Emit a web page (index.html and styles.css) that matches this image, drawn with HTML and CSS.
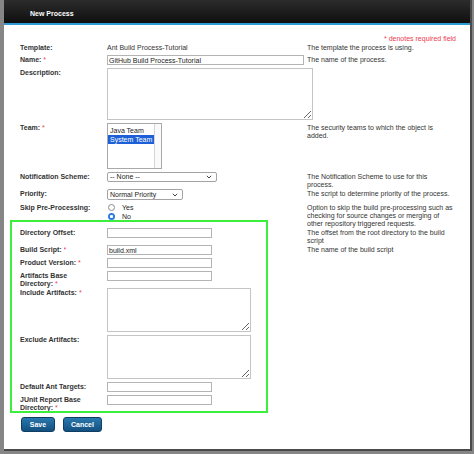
FILE: index.html
```html
<!DOCTYPE html>
<html lang="en">
<head>
  <meta charset="UTF-8">
  <meta name="viewport" content="width=device-width, initial-scale=1.0">
  <title>New Process</title>
  <link rel="stylesheet" href="styles.css">
</head>
<body>

  <div class="dialog">
    <div class="dialog-head">
      <h1>New Process</h1>
    </div>

    <div class="dialog-body">
      <div class="req-note">* denotes required field</div>

      <!-- Process form -->
      <div class="form">
        <div class="lbl">Template:</div>
        <div class="val-text">Ant Build Process-Tutorial</div>
        <div class="help">The template the process is using.</div>

        <div class="lbl">Name: <span class="req">*</span></div>
        <div class="val"><input class="field w-name" type="text" value="GitHub Build Process-Tutorial"></div>
        <div class="help">The name of the process.</div>

        <div class="lbl">Description:</div>
        <div class="val"><textarea class="area w-desc"></textarea></div>
        <div class="help"></div>

        <div class="lbl">Team: <span class="req">*</span></div>
        <div class="val">
          <div class="listbox">
            <div class="options">
              <div class="opt">Java Team</div>
              <div class="opt selected">System Team</div>
            </div>
            <div class="track"></div>
          </div>
        </div>
        <div class="help">The security teams to which the object is added.</div>

        <div class="lbl">Notification Scheme:</div>
        <div class="val">
          <div class="select sel-notif">-- None --
            <svg class="chev" width="6" height="4" viewBox="0 0 6 4"><path d="M0.8 0.8 L3 3 L5.2 0.8" fill="none" stroke="#444" stroke-width="1"/></svg>
          </div>
        </div>
        <div class="help">The Notification Scheme to use for this process.</div>

        <div class="lbl">Priority:</div>
        <div class="val">
          <div class="select sel-pri">Normal Priority
            <svg class="chev" width="6" height="4" viewBox="0 0 6 4"><path d="M0.8 0.8 L3 3 L5.2 0.8" fill="none" stroke="#444" stroke-width="1"/></svg>
          </div>
        </div>
        <div class="help">The script to determine priority of the process.</div>

        <div class="lbl">Skip Pre-Processing:</div>
        <div class="val">
          <div class="radio-line"><span class="radio"></span>Yes</div>
          <div class="radio-line"><span class="radio checked"></span>No</div>
        </div>
        <div class="help">Option to skip the build pre-processing such as checking for source changes or merging of other repository triggered requests.</div>

        <div class="lbl">Directory Offset:</div>
        <div class="val"><input class="field w-short" type="text" value=""></div>
        <div class="help">The offset from the root directory to the build script</div>

        <div class="lbl">Build Script: <span class="req">*</span></div>
        <div class="val"><input class="field w-short" type="text" value="build.xml"></div>
        <div class="help">The name of the build script</div>

        <div class="lbl">Product Version: <span class="req">*</span></div>
        <div class="val"><input class="field w-short" type="text" value=""></div>
        <div class="help"></div>

        <div class="lbl">Artifacts Base<br>Directory: <span class="req">*</span></div>
        <div class="val"><input class="field w-short" type="text" value=""></div>
        <div class="help"></div>

        <div class="lbl">Include Artifacts: <span class="req">*</span></div>
        <div class="val"><textarea class="area w-art"></textarea></div>
        <div class="help"></div>

        <div class="lbl">Exclude Artifacts:</div>
        <div class="val"><textarea class="area w-art"></textarea></div>
        <div class="help"></div>

        <div class="lbl">Default Ant Targets:</div>
        <div class="val"><input class="field w-short" type="text" value=""></div>
        <div class="help"></div>

        <div class="lbl">JUnit Report Base<br>Directory: <span class="req">*</span></div>
        <div class="val"><input class="field w-short" type="text" value=""></div>
        <div class="help"></div>
      </div>

      <div class="actions">
        <button class="btn">Save</button>
        <button class="btn">Cancel</button>
      </div>
    </div>

    <!-- annotation box drawn over the ant fields -->
    <div class="highlight"></div>
  </div>

</body>
</html>
```

FILE: styles.css
```css
body {
  margin: 0;
  background-color: #868686;
  font-family: "Liberation Sans", Arial, sans-serif;
  font-size: 7px;
  color: #333;
}

.dialog {
  position: relative;
  box-sizing: border-box;
  margin-left: 4px;
  width: 468px;
  height: 451px;
  background-color: #fff;
  border-right: 2px solid #4a4a4a;
  border-bottom: 2px solid #4a4a4a;
}

.dialog-head {
  box-sizing: border-box;
  height: 25px;
  padding: 10px 0 0 26px;
  background: linear-gradient(#2c2c2c, #0f0f0f);
  border-bottom: 2px solid #2f9bd4;
}
.dialog-head h1 {
  margin: 0;
  font-size: 7px;
  line-height: 8px;
  font-weight: bold;
  color: #fff;
}

.dialog-body {
  padding: 10px 16px 0 16px;
}

.req-note {
  text-align: right;
  line-height: 8px;
  color: #f0394f;
  margin-right: -2px;
}

/* Form grid: label | control | help */
.form {
  display: grid;
  grid-template-columns: 87px 200px 147px;
  row-gap: 3px;
}
.lbl,
.help {
  padding-top: 1px;
  line-height: 8px;
  margin-bottom: -3px;
}
.lbl {
  font-weight: bold;
  padding-right: 7px;
}
.help {
  color: #333;
}
.val-text {
  padding-top: 1px;
  line-height: 8px;
  min-height: 8px;
  color: #333;
}
.req {
  display: inline-block;
  height: 8px;
  line-height: 8px;
  overflow: hidden;
  vertical-align: top;
  color: #f0394f;
  font-weight: normal;
}

.field {
  display: block;
  box-sizing: border-box;
  height: 10px;
  margin: 0;
  padding: 0 1px;
  border: 1px solid #b4b4b4;
  font-family: "Liberation Sans", Arial, sans-serif;
  font-size: 7px;
  color: #222;
  background: #fff;
  outline: none;
}
.w-name { width: 197px; }
.w-short { width: 105px; }

.area {
  display: block;
  box-sizing: border-box;
  margin: 0;
  padding: 1px;
  border: 1px solid #c4c4c4;
  font-family: "Liberation Sans", Arial, sans-serif;
  font-size: 7px;
  resize: both;
  background: #fff;
}
.w-desc { width: 206px; height: 52px; }
.w-art { width: 144px; height: 44px; }

/* Team list */
.listbox {
  box-sizing: border-box;
  display: flex;
  width: 55px;
  height: 46px;
  border: 1px solid #a9a9a9;
  background: #fff;
}
.options {
  flex: 1;
  padding-top: 2px;
}
.opt {
  line-height: 9px;
  padding-left: 2px;
  color: #222;
}
.opt.selected {
  background-color: #1d5fd6;
  color: #fff;
}
.track {
  width: 6px;
  border-left: 1px solid #d6d6d6;
  background: #fafafa;
}

/* Dropdowns */
.select {
  box-sizing: border-box;
  display: flex;
  align-items: center;
  justify-content: space-between;
  height: 10px;
  padding: 0 4px 0 2px;
  border: 1px solid #a3a3a3;
  border-radius: 2px;
  background: #fff;
  color: #222;
  line-height: 8px;
}
.sel-notif { width: 110px; }
.sel-pri { width: 76px; height: 11px; }

/* Radios */
.radio-line {
  display: flex;
  align-items: center;
  height: 9px;
  padding-left: 1px;
  color: #222;
}
.radio {
  box-sizing: border-box;
  width: 7px;
  height: 7px;
  margin-right: 7px;
  border: 1px solid #8c8c8c;
  border-radius: 50%;
  background: #fff;
}
.radio.checked {
  border: none;
  background: radial-gradient(circle, #fff 0 1.3px, #2c7be5 1.8px);
}

.actions {
  display: flex;
  gap: 8px;
  margin: 8px 0 0 1px;
}
.btn {
  box-sizing: border-box;
  min-width: 34px;
  height: 15px;
  padding: 0 7px;
  border: 1px solid #0e3e63;
  border-radius: 3px;
  background: linear-gradient(#2a78ae, #13507f);
  color: #fff;
  font-family: "Liberation Sans", Arial, sans-serif;
  font-size: 7px;
  font-weight: bold;
  cursor: pointer;
}

.highlight {
  position: absolute;
  left: 6px;
  top: 220px;
  width: 258px;
  height: 193px;
  box-sizing: border-box;
  border: 2px solid #3cef3c;
  pointer-events: none;
}
```
